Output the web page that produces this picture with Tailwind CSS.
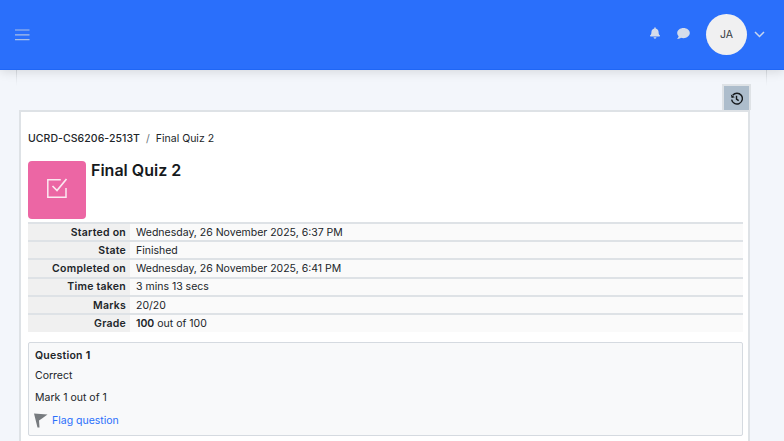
<!DOCTYPE html>
<html lang="en">
<head>
<meta charset="UTF-8" />
<meta name="viewport" content="width=device-width, initial-scale=1.0" />
<script src="https://cdn.jsdelivr.net/npm/@tailwindcss/browser@4"></script>
<title>Final Quiz 2</title>
</head>
<body class="relative h-[441px] overflow-hidden bg-[#f3f6fb] font-['Inter','Liberation_Sans',sans-serif] text-[10.5px] text-[#212529]">
    <header class="relative z-10 flex h-[70px] items-center justify-between bg-[#2a6ffb] pl-[15px] pr-[19px] border-b border-[#1f66f5] shadow-[0_2px_10px_rgba(0,0,0,0.12)]">
        <svg width="15" height="12" viewBox="0 0 15 12" class="text-[#a9bfe8]" fill="none" stroke="currentColor" stroke-width="1.2">
            <path d="M0 1h14.5M0 5.8h14.5M0 10.6h14.5" />
        </svg>
        <div class="flex items-center">
            <svg width="10" height="12" viewBox="0 0 448 512" class="mr-[17px] mb-[3px] text-[#d5dcea]" fill="currentColor">
                <path d="M224 512c35 0 64-29 64-64H160c0 35 29 64 64 64zm215-150c-19-21-55-52-55-154 0-78-54-140-128-155V32a32 32 0 1 0-64 0v21C118 68 64 130 64 208c0 102-36 133-55 154-6 6-9 14-9 22 0 16 13 32 32 32h384c19 0 32-16 32-32 0-8-3-16-9-22z" />
            </svg>
            <svg width="13" height="11" viewBox="0 0 512 448" class="mr-[16px] mb-[3px] text-[#d5dcea]" fill="currentColor">
                <path d="M256 0C115 0 0 93 0 208c0 50 22 95 58 131-13 50-54 95-55 95-3 3-4 8-2 12s5 2 9 2c66 0 116-32 140-51 33 12 69 19 106 19 141 0 256-93 256-208S397 0 256 0z" />
            </svg>
            <div class="flex h-[41px] w-[41px] items-center justify-center rounded-full bg-[#f0f0f1] text-[10.5px] text-[#343a40]">JA</div>
            <svg width="11" height="7" viewBox="0 0 11 7" class="ml-[7px] text-[#c9d6ee]" fill="none" stroke="currentColor" stroke-width="1.5">
                <path d="M1 1l4.5 4.5L10 1" />
            </svg>
        </div>
    </header>

    <!-- faint edges of the content column, just under the header -->
    <div class="absolute top-[70px] left-[16px] h-[16px] w-px bg-gradient-to-b from-[#d6dae0] to-transparent"></div>
    <div class="absolute top-[70px] left-[766px] h-[16px] w-px bg-gradient-to-b from-[#d6dae0] to-transparent"></div>

    <main class="ml-[19px] w-[732px]">
        <div class="flex h-[40px] items-end justify-end">
            <button class="flex h-[26px] w-[29px] items-center justify-center border-2 border-b-0 border-[#dee2e6] bg-[#adbdcc]">
                <svg width="13" height="13" viewBox="0 0 24 24" fill="none" stroke="#16191c" stroke-width="2.6">
                    <path d="M5 6a10 10 0 1 1-2 8" />
                    <path d="M1.5 4.5 3 11l6-1.5z" fill="#16191c" stroke="none" />
                    <path d="M12 7v6l4 3" />
                </svg>
            </button>
        </div>
        <section class="h-[340px] w-[731px] border-2 border-[#dee2e6] bg-white px-[7px]">
            <nav class="flex h-[35px] items-end">
                <span class="font-medium tracking-[0.06px]">UCRD-CS6206-2513T</span>
                <span class="mx-[6px] text-[#6c757d]">/</span>
                <span>Final Quiz 2</span>
            </nav>
            <div class="mt-[14px] flex h-[61px] items-start">
                <div class="flex h-[58px] w-[58px] items-center justify-center rounded-[4px] bg-[#ec66a4]">
                    <svg width="22" height="22" viewBox="0 0 22 22" class="mb-[4px]" fill="none" stroke="#fbe9f1" stroke-width="1.5">
                        <path d="M20 11v9.2H1.8V2.8h13" />
                        <path d="M6.5 9l4.5 4.5L20.5 2" stroke-width="1.7" />
                    </svg>
                </div>
                <h1 class="ml-[5px] text-[16px] leading-[19px] font-semibold text-[#16191c]">Final Quiz 2</h1>
            </div>

            <table class="w-[715px] border-collapse leading-[14px]">
                <tbody>
                    <tr class="h-[18.2px] border-t-2 border-[#dee2e6]">
                        <th class="w-[102px] bg-[#f0f0f0] pt-[1.5px] pr-[4px] text-right font-semibold tracking-[0.25px]">Started on</th>
                        <td class="bg-[#fafafa] pt-[1.5px] pl-[6px]">Wednesday, 26 November 2025, 6:37 PM</td>
                    </tr>
                    <tr class="h-[18.2px] border-t-2 border-[#dee2e6]">
                        <th class="bg-[#f0f0f0] pt-[1.5px] pr-[4px] text-right font-semibold tracking-[0.25px]">State</th>
                        <td class="bg-[#fafafa] pt-[1.5px] pl-[6px]">Finished</td>
                    </tr>
                    <tr class="h-[18.2px] border-t-2 border-[#dee2e6]">
                        <th class="bg-[#f0f0f0] pt-[1.5px] pr-[4px] text-right font-semibold tracking-[0.25px]">Completed on</th>
                        <td class="bg-[#fafafa] pt-[1.5px] pl-[6px]">Wednesday, 26 November 2025, 6:41 PM</td>
                    </tr>
                    <tr class="h-[18.2px] border-t-2 border-[#dee2e6]">
                        <th class="bg-[#f0f0f0] pt-[1.5px] pr-[4px] text-right font-semibold tracking-[0.25px]">Time taken</th>
                        <td class="bg-[#fafafa] pt-[1.5px] pl-[6px]">3 mins 13 secs</td>
                    </tr>
                    <tr class="h-[18.2px] border-t-2 border-[#dee2e6]">
                        <th class="bg-[#f0f0f0] pt-[1.5px] pr-[4px] text-right font-semibold tracking-[0.25px]">Marks</th>
                        <td class="bg-[#fafafa] pt-[1.5px] pl-[6px]">20/20</td>
                    </tr>
                    <tr class="h-[18.2px] border-t-2 border-[#dee2e6]">
                        <th class="bg-[#f0f0f0] pt-[1.5px] pr-[4px] text-right font-semibold tracking-[0.25px]">Grade</th>
                        <td class="bg-[#fafafa] pt-[1.5px] pl-[6px]"><b class="font-semibold">100</b> out of 100</td>
                    </tr>
                </tbody>
            </table>

            <div class="mt-[10px] h-[94px] w-[715px] rounded-[2px] border-[1.5px] border-[#d5dae0] bg-[#f8f9fa] px-[6px] pt-[6px]">
                <h3 class="text-[10.5px] leading-[14px] font-semibold tracking-[0.25px]">Question <span class="font-bold">1</span></h3>
                <div class="mt-[6px] leading-[14px]">Correct</div>
                <div class="mt-[8px] leading-[14px]">Mark 1 out of 1</div>
                <div class="mt-[8px] flex items-center">
                    <svg width="14" height="15" viewBox="0 0 14 15" class="-ml-[1px] -mt-[2px]" fill="#777b7f">
                        <path d="M0 0.5 13.5 1.5 8 5.5 5 7.5 5.5 14.5 3.5 14.5z" />
                    </svg>
                    <a href="#" class="ml-[4px] text-[#2a6ffb]">Flag question</a>
                </div>
            </div>
        </section>
    </main>
</body>
</html>
